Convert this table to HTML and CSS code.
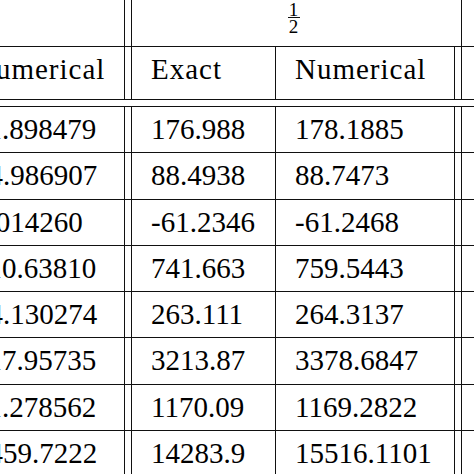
FILE: index.html
```html
<!DOCTYPE html>
<html>
<head>
<meta charset="utf-8">
<link rel="stylesheet" href="styles.css">
</head>
<body>
<div class="viewport">
  <div class="tbl">
    <div class="cell ca"></div>
    <div class="cell sp"></div>
    <div class="cell grp"><span class="frac"><span class="num">1</span><span class="bar"></span><span class="num">2</span></span></div>
    <div class="cell sp"></div>
    <div class="cell cd"></div>

    <div class="cell ca head">Numerical</div>
    <div class="cell sp"></div>
    <div class="cell cb head">Exact</div>
    <div class="cell cc head">Numerical</div>
    <div class="cell sp"></div>
    <div class="cell cd"></div>

    <div class="gap"></div>

    <div class="cell ca">11.898479</div><div class="cell sp"></div><div class="cell cb">176.988</div><div class="cell cc">178.1885</div><div class="cell sp"></div><div class="cell cd"></div>
    <div class="cell ca">14.986907</div><div class="cell sp"></div><div class="cell cb">88.4938</div><div class="cell cc">88.7473</div><div class="cell sp"></div><div class="cell cd"></div>
    <div class="cell ca">0.014260</div><div class="cell sp"></div><div class="cell cb">-61.2346</div><div class="cell cc">-61.2468</div><div class="cell sp"></div><div class="cell cd"></div>
    <div class="cell ca">110.63810</div><div class="cell sp"></div><div class="cell cb">741.663</div><div class="cell cc">759.5443</div><div class="cell sp"></div><div class="cell cd"></div>
    <div class="cell ca">14.130274</div><div class="cell sp"></div><div class="cell cb">263.111</div><div class="cell cc">264.3137</div><div class="cell sp"></div><div class="cell cd"></div>
    <div class="cell ca">117.95735</div><div class="cell sp"></div><div class="cell cb">3213.87</div><div class="cell cc">3378.6847</div><div class="cell sp"></div><div class="cell cd"></div>
    <div class="cell ca">11.278562</div><div class="cell sp"></div><div class="cell cb">1170.09</div><div class="cell cc">1169.2822</div><div class="cell sp"></div><div class="cell cd"></div>
    <div class="cell ca">1459.7222</div><div class="cell sp"></div><div class="cell cb">14283.9</div><div class="cell cc">15516.1101</div><div class="cell sp"></div><div class="cell cd"></div>
  </div>
</div>
</body>
</html>
```
FILE: styles.css
```css
html, body {
  margin: 0;
  padding: 0;
  background: #ffffff;
}

.viewport {
  width: 474px;
  height: 474px;
  overflow: hidden;
  background: #ffffff;
}

.tbl {
  display: grid;
  grid-template-columns: 168px 7px 144px 179px 7px 120px;
  grid-template-rows: 55px 53px 7px repeat(8, 46.27px);
  margin-left: -43px;
  margin-top: -8px;
  width: 625px;
  font-family: "Liberation Serif", "Times New Roman", serif;
  font-size: 29px;
  color: #000000;
}

.cell {
  box-sizing: border-box;
  display: flex;
  align-items: center;
  padding-left: 19px;
  border-bottom: 1px solid #111111;
  white-space: nowrap;
  overflow: hidden;
}

.ca {
  padding-left: 17px;
}

.ca, .sp, .cb, .cc {
  border-right: 1px solid #111111;
}

.sp {
  padding-left: 0;
}

.head {
  letter-spacing: 1px;
  padding-bottom: 7px;
}

.grp {
  grid-column: span 2;
  justify-content: center;
  align-items: flex-start;
  padding-left: 0;
  padding-top: 11px;
}

.frac {
  display: inline-flex;
  flex-direction: column;
  align-items: center;
  font-size: 19px;
}

.frac .num {
  line-height: 13px;
  height: 13px;
}

.frac .bar {
  width: 12px;
  height: 1px;
  background: #111111;
  margin-top: 1px;
  margin-bottom: 2px;
}

.gap {
  grid-column: 1 / -1;
  border-bottom: 1px solid #111111;
}
```
